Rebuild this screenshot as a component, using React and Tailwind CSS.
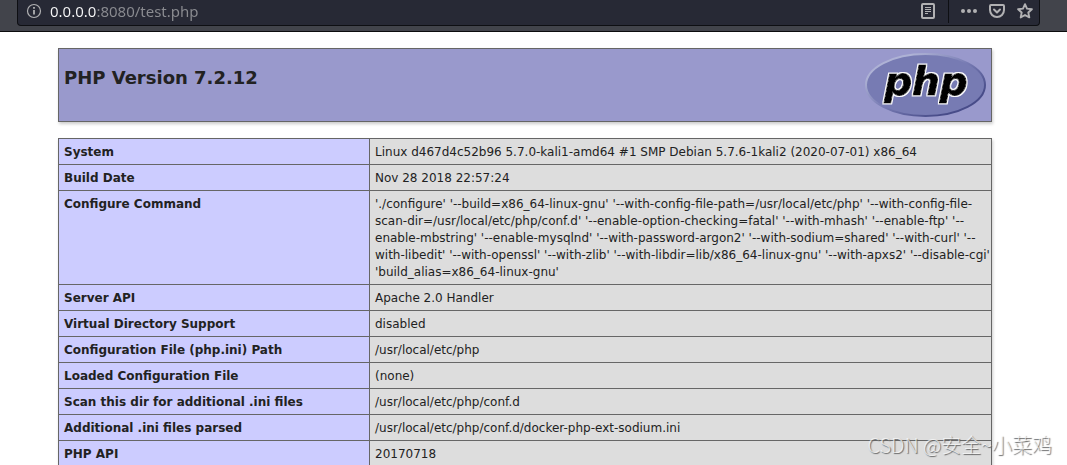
import React from "react";

const rows = [
  ["System", "Linux d467d4c52b96 5.7.0-kali1-amd64 #1 SMP Debian 5.7.6-1kali2 (2020-07-01) x86_64"],
  ["Build Date", "Nov 28 2018 22:57:24"],
  [
    "Configure Command",
    "'./configure' '--build=x86_64-linux-gnu' '--with-config-file-path=/usr/local/etc/php' '--with-config-file-scan-dir=/usr/local/etc/php/conf.d' '--enable-option-checking=fatal' '--with-mhash' '--enable-ftp' '--enable-mbstring' '--enable-mysqlnd' '--with-password-argon2' '--with-sodium=shared' '--with-curl' '--with-libedit' '--with-openssl' '--with-zlib' '--with-libdir=lib/x86_64-linux-gnu' '--with-apxs2' '--disable-cgi' 'build_alias=x86_64-linux-gnu'",
  ],
  ["Server API", "Apache 2.0 Handler"],
  ["Virtual Directory Support", "disabled"],
  ["Configuration File (php.ini) Path", "/usr/local/etc/php"],
  ["Loaded Configuration File", "(none)"],
  ["Scan this dir for additional .ini files", "/usr/local/etc/php/conf.d"],
  ["Additional .ini files parsed", "/usr/local/etc/php/conf.d/docker-php-ext-sodium.ini"],
  ["PHP API", "20170718"],
];

function InfoIcon() {
  return (
    <svg viewBox="0 0 16 16" className="h-4 w-4" fill="none" stroke="currentColor">
      <circle cx="8" cy="8" r="6.5" strokeWidth="1.2" />
      <path d="M8 7v4.5M8 4v1.8" strokeWidth="1.8" />
    </svg>
  );
}

function ReaderIcon() {
  return (
    <svg viewBox="0 0 16 16" className="h-4 w-4" fill="none" stroke="currentColor">
      <rect x="2" y="1" width="12" height="14" rx="1" strokeWidth="2" />
      <path d="M5 4.5h6M5 6.5h6M5 8.5h6M5 10.5h3" strokeWidth="1" />
    </svg>
  );
}

function DotsIcon() {
  return (
    <svg viewBox="0 0 16 16" className="h-4 w-4" fill="currentColor">
      <circle cx="2" cy="8" r="2" />
      <circle cx="8" cy="8" r="2" />
      <circle cx="14" cy="8" r="2" />
    </svg>
  );
}

function PocketIcon() {
  return (
    <svg viewBox="0 0 16 16" className="h-4 w-4" fill="none" stroke="currentColor" strokeWidth="2" strokeLinecap="round" strokeLinejoin="round">
      <path d="M2 2h12a1 1 0 0 1 1 1v4a7 7 0 0 1-14 0V3a1 1 0 0 1 1-1z" />
      <path d="M5 6.5l3 3 3-3" />
    </svg>
  );
}

function StarIcon() {
  return (
    <svg viewBox="0 0 16 16" className="h-4 w-4" fill="none" stroke="currentColor" strokeWidth="1.9" strokeLinejoin="round">
      <path d="M8 1.2l2 4.4 4.9.6-3.6 3.3 1 4.9L8 12l-4.3 2.4 1-4.9L1.1 6.2l4.9-.6z" />
    </svg>
  );
}

function PhpLogo() {
  return (
    <svg viewBox="0 0 121 64" className="h-16 w-[121px] shrink-0" role="img" aria-label="PHP logo">
      <defs>
        <linearGradient id="rim" x1="0" y1="0" x2="1" y2="1">
          <stop offset="0.2" stopColor="#aeb2d5" />
          <stop offset="0.5" stopColor="#777bb3" />
          <stop offset="0.8" stopColor="#484c89" />
        </linearGradient>
        <filter id="outline" x="-10%" y="-10%" width="120%" height="120%">
          <feMorphology in="SourceAlpha" operator="dilate" radius="1" result="grown" />
          <feFlood floodColor="#fff" />
          <feComposite in2="grown" operator="in" result="edge" />
          <feMerge>
            <feMergeNode in="edge" />
            <feMergeNode in="SourceGraphic" />
          </feMerge>
        </filter>
      </defs>
      <ellipse cx="60.5" cy="32" rx="59.5" ry="31" fill="#777bb3" stroke="url(#rim)" strokeWidth="2" />
      <text
        x="61"
        y="42"
        textAnchor="middle"
        fontFamily="DejaVu Sans, sans-serif"
        fontSize="39"
        fontWeight="bold"
        fontStyle="italic"
        fill="#000"
        stroke="#000"
        strokeWidth="1"
        filter="url(#outline)"
      >
        php
      </text>
    </svg>
  );
}

function AddressBar() {
  return (
    <div className="border-b border-[#0c0c0d] bg-[#42444b] pr-[27px] pb-[5px] pl-[17px]">
      <div className="flex h-[26px] items-center rounded-b border border-t-0 border-[#0e0f13] bg-[#272935] pr-1.5 pb-[3px] pl-2 text-[#b1b1b3]">
        <button type="button" aria-label="Site information">
          <InfoIcon />
        </button>
        <input
          type="text"
          aria-label="Address"
          defaultValue="0.0.0.0:8080/test.php"
          className="ml-2 min-w-0 flex-1 bg-[linear-gradient(to_right,#f9f9fa_47px,#8b8c91_47px)] bg-clip-text font-['Noto_Sans',sans-serif] text-[15px] leading-5 text-transparent outline-none"
        />
        <button type="button" aria-label="Reader view">
          <ReaderIcon />
        </button>
        <span className="mx-3 h-6 w-px bg-[#0e0f13]" />
        <div className="flex gap-3">
          <button type="button" aria-label="Page actions">
            <DotsIcon />
          </button>
          <button type="button" aria-label="Save to Pocket">
            <PocketIcon />
          </button>
          <button type="button" aria-label="Bookmark this page">
            <StarIcon />
          </button>
        </div>
      </div>
    </div>
  );
}

export default function App() {
  return (
    <div className="relative h-screen overflow-hidden bg-white font-['DejaVu_Sans',sans-serif] text-[#222]">
      <AddressBar />
      <main className="mt-4 mr-[17px]">
        <div className="mx-auto w-full max-w-[934px]">
          <header className="flex items-start justify-between border border-[#666] bg-[#9999cc] px-[5px] py-1 shadow-[1px_2px_3px_#ccc]">
            <h1 className="mt-[13px] text-lg leading-6 font-bold">PHP Version 7.2.12</h1>
            <PhpLogo />
          </header>
          <table className="mt-4 w-full border-collapse text-left text-xs leading-[17px] shadow-[1px_2px_3px_#ccc]">
            <tbody>
              {rows.map(([name, value]) => (
                <tr key={name} className="align-top">
                  <th scope="row" className="w-[311px] border border-[#666] bg-[#ccccff] px-[5px] pt-[5px] pb-[3px] font-bold">
                    {name}
                  </th>
                  <td className="border border-[#666] bg-[#dddddd] pt-[5px] pr-0 pb-[3px] pl-[5px]">{value}</td>
                </tr>
              ))}
            </tbody>
          </table>
        </div>
      </main>
      <p className="absolute right-[15px] bottom-1.5 font-['Noto_Sans_CJK_SC',sans-serif] text-xl leading-7 font-light text-white/70 [text-shadow:1px_1px_1px_#666]">
        CSDN @安全~小菜鸡
      </p>
    </div>
  );
}
